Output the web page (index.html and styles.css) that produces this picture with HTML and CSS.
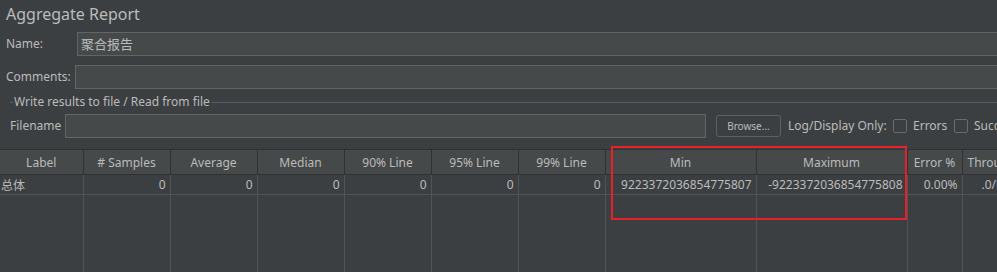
FILE: index.html
```html
<!DOCTYPE html>
<html>
<head>
<meta charset="utf-8">
<link rel="stylesheet" href="styles.css">
</head>
<body>
<div class="page">
  <div class="title">Aggregate Report</div>
  <div class="row name-row">
    <span class="lbl name-lbl">Name:</span>
    <div class="field name-field">聚合报告</div>
  </div>
  <div class="row comments-row">
    <span class="lbl comments-lbl">Comments:</span>
    <div class="field comments-field"></div>
  </div>
  <div class="group-title">
    <span class="gline short"></span>
    <span class="gtext">Write results to file / Read from file</span>
    <span class="gline long"></span>
  </div>
  <div class="row file-row">
    <span class="lbl file-lbl">Filename</span>
    <div class="field file-field"></div>
    <div class="btn">Browse...</div>
    <span class="lbl log-lbl">Log/Display Only:</span>
    <span class="cb"></span>
    <span class="lbl cb-lbl">Errors</span>
    <span class="cb"></span>
    <span class="lbl cb-lbl">Successes</span>
  </div>
  <div class="table-wrap">
    <table class="grid">
      <colgroup>
        <col class="c83"><col class="c87"><col class="c87"><col class="c87"><col class="c87"><col class="c87"><col class="c87"><col class="c151"><col class="c151"><col class="c55"><col class="c100">
      </colgroup>
      <thead>
        <tr>
          <th>Label</th><th># Samples</th><th>Average</th><th>Median</th><th>90% Line</th><th>95% Line</th><th>99% Line</th><th>Min</th><th>Maximum</th><th>Error %</th><th class="clip">Throughput</th>
        </tr>
      </thead>
      <tbody>
        <tr class="data">
          <td class="left">总体</td><td>0</td><td>0</td><td>0</td><td>0</td><td>0</td><td>0</td><td>9223372036854775807</td><td>-9223372036854775808</td><td>0.00%</td><td class="thr">.0/hour</td>
        </tr>
        <tr class="filler">
          <td></td><td></td><td></td><td></td><td></td><td></td><td></td><td></td><td></td><td></td><td></td>
        </tr>
      </tbody>
    </table>
    <div class="highlight"></div>
  </div>
</div>
</body>
</html>
```

FILE: styles.css
```css
html, body {
  margin: 0;
  padding: 0;
  background: #3c3f41;
  overflow: hidden;
}
body {
  width: 997px;
  height: 272px;
  font-family: "Noto Sans", "Noto Sans CJK SC", sans-serif;
  font-size: 12px;
  color: #bbbbbb;
}
.page {
  width: 997px;
  height: 272px;
  overflow: hidden;
}
.title {
  font-size: 16px;
  line-height: 20px;
  height: 20px;
  padding: 4px 0 0 6px;
  color: #bbbbbb;
}
.row {
  display: flex;
  align-items: center;
  white-space: nowrap;
}
.lbl {
  line-height: 16px;
  flex: none;
}
.field {
  flex: none;
  box-sizing: border-box;
  height: 24px;
  background: #45494a;
  border: 1px solid #646464;
  line-height: 22px;
  padding-left: 3px;
}
.name-row {
  margin-top: 8px;
  padding-left: 6px;
}
.name-lbl { width: 71px; }
.name-field {
  width: 960px;
  font-family: "Noto Sans CJK SC", sans-serif;
  font-size: 13px;
}
.comments-row {
  margin-top: 9px;
  padding-left: 6px;
}
.comments-lbl { width: 69px; }
.comments-field { width: 960px; }
.group-title {
  display: flex;
  align-items: center;
  margin-top: 6px;
  height: 14px;
  padding-left: 10px;
  white-space: nowrap;
}
.gline {
  height: 1px;
  background: #5a5d5f;
}
.gline.short { width: 3px; flex: none; }
.gline.long { flex: 1; }
.gtext { padding: 0 2px 0 1px; line-height: 14px; }
.file-row {
  margin-top: 5px;
  padding-left: 10px;
}
.file-lbl { width: 55px; }
.file-field { width: 641px; }
.btn {
  flex: none;
  box-sizing: border-box;
  margin-left: 10px;
  width: 65px;
  height: 22px;
  border: 1px solid #5e6060;
  border-radius: 3px;
  font-size: 10px;
  line-height: 20px;
  text-align: center;
  color: #bbbbbb;
}
.log-lbl {
  margin-left: 7px;
  width: 105px;
}
.cb {
  flex: none;
  box-sizing: border-box;
  width: 14px;
  height: 14px;
  border: 1px solid #6b6b6b;
  border-radius: 2px;
  background: #3c3f41;
}
.cb-lbl {
  margin-left: 6px;
  width: 41px;
}
.table-wrap {
  position: relative;
  margin-top: 11px;
  width: 1100px;
}
.grid {
  border-collapse: collapse;
  table-layout: fixed;
  width: 1062px;
}
.c83 { width: 83px; }
.c87 { width: 87px; }
.c151 { width: 151px; }
.c55 { width: 55px; }
.c100 { width: 100px; }
.grid th {
  background: #45494a;
  height: 25px;
  padding: 0;
  font-weight: normal;
  text-align: center;
  border-top: 1px solid #2f3133;
  border-bottom: 1px solid #2f3133;
  border-right: 1px solid #2f3133;
  white-space: nowrap;
  overflow: hidden;
  box-sizing: border-box;
}
.grid th.clip { text-align: left; padding-left: 5px; }
.grid td {
  padding: 0 4px 0 0;
  text-align: right;
  border-right: 1px solid #505456;
  white-space: nowrap;
  overflow: hidden;
}
.grid td.left {
  text-align: left;
  padding-left: 1px;
  font-family: "Noto Sans CJK SC", sans-serif;
}
.grid td.thr { text-align: left; padding-left: 19px; }
.grid tr.data td {
  height: 19px;
  line-height: 19px;
  border-bottom: 1px solid #505456;
}
.grid tr.filler td {
  height: 80px;
}
.highlight {
  position: absolute;
  left: 611px;
  top: -3px;
  width: 296px;
  height: 74px;
  box-sizing: border-box;
  border: 2px solid #e8202a;
  pointer-events: none;
}
```
